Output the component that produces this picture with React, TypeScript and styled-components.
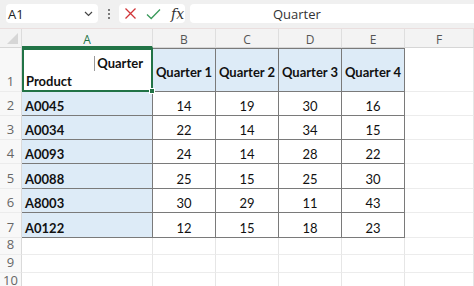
import { Fragment } from "react";
import styled, { createGlobalStyle } from "styled-components";

const GlobalStyle = createGlobalStyle`
  html, body {
    margin: 0;
    padding: 0;
    background: #ffffff;
    overflow: hidden;
  }
  * { box-sizing: border-box; }
`;

const Page = styled.div`
  width: 474px;
  height: 286px;
  overflow: hidden;
  font-family: "Open Sans", "Noto Sans", sans-serif;
`;

const Toolbar = styled.div`
  height: 29px;
  background: #f0f0f0;
  border-bottom: 1px solid #eadede;
  display: flex;
  align-items: center;
  padding: 0 0 1px 6px;
`;

const NameBox = styled.div`
  width: 92px;
  height: 19px;
  background: #fff;
  border-radius: 4px;
  display: flex;
  align-items: center;
  justify-content: space-between;
  padding: 0 5px 0 2px;
  font-size: 13px;
  color: #222;
`;

const Dots = styled.div`
  width: 21px;
  display: flex;
  flex-direction: column;
  align-items: center;
  gap: 2px;
  span {
    width: 2px;
    height: 2px;
    border-radius: 1px;
    background: #555;
  }
`;

const ActionBox = styled.div`
  width: 66px;
  height: 19px;
  background: #fff;
  border-radius: 4px;
  display: flex;
  align-items: center;
  gap: 9px;
  padding-left: 5px;
`;

const Fx = styled.span`
  font-family: "DejaVu Serif", "Liberation Serif", serif;
  font-style: italic;
  font-size: 14px;
  color: #333;
  margin-left: 1px;
`;

const FormulaBox = styled.div`
  flex: 1;
  height: 19px;
  margin-left: 5px;
  background: #fff;
  border-radius: 4px 0 0 4px;
  display: flex;
  align-items: center;
  padding-left: 83px;
  font-size: 13px;
  color: #333;
`;

const Sheet = styled.div`
  display: grid;
  grid-template-columns: 22px 131px 63px 63px 63px 63px 1fr;
  grid-template-rows: 19px 44px 24px 24px 24px 25px 24px 25px 17px 18px 18px;
  font-family: Lato, "Open Sans", sans-serif;
  font-size: 13px;
  color: #111;
`;

const Corner = styled.div`
  background: #f3f3f3;
  border-right: 1px solid #dcdcdc;
  border-bottom: 1px solid #d6d6d6;
  position: relative;
  &::after {
    content: "";
    position: absolute;
    right: 3px;
    bottom: 3px;
    width: 0;
    height: 0;
    border-left: 11px solid transparent;
    border-bottom: 11px solid #d6d6d6;
  }
`;

const ColHead = styled.div<{ $active?: boolean }>`
  background: #f3f3f3;
  border-right: 1px solid #dedede;
  border-bottom: ${(p) => (p.$active ? "2px solid #217346" : "1px solid #d6d6d6")};
  display: flex;
  align-items: center;
  justify-content: center;
  padding-top: ${(p) => (p.$active ? "4px" : "3px")};
  font-family: "Open Sans", "Noto Sans", sans-serif;
  font-size: 12px;
  color: ${(p) => (p.$active ? "#217346" : "#555")};
`;

const RowHead = styled.div`
  background: #f8f8f8;
  border-right: 1px solid #dadada;
  border-bottom: 1px solid #ececec;
  display: flex;
  align-items: flex-end;
  justify-content: center;
  padding-bottom: 1px;
  font-family: "Open Sans", "Noto Sans", sans-serif;
  font-size: 13px;
  color: #666;
`;

const Cell = styled.div<{ $fill?: boolean; $table?: boolean; $bold?: boolean; $align?: string; $top?: boolean }>`
  background: ${(p) => (p.$fill ? "#ddebf7" : "#fff")};
  border-right: 1px solid ${(p) => (p.$table ? "#7a7a7a" : "#e6e6e6")};
  border-bottom: 1px solid ${(p) => (p.$table ? "#7a7a7a" : "#ececec")};
  ${(p) => (p.$top ? "border-top: 1px solid #7a7a7a;" : "")}
  display: flex;
  align-items: ${(p) => (p.$align === "center" ? "center" : "flex-end")};
  justify-content: ${(p) => (p.$align === "left" ? "flex-start" : "center")};
  padding: ${(p) => (p.$align === "center" ? "3px 3px 0" : "0 3px 1px 3px")};
  font-weight: ${(p) => (p.$bold ? 700 : 400)};
  white-space: nowrap;
`;

const TitleCell = styled.div`
  background: #fff;
  border: 2px solid #217346;
  position: relative;
  display: flex;
  flex-direction: column;
  justify-content: flex-end;
  padding: 0 8px 0 2px;
  font-weight: 700;
  line-height: 18px;
`;

const TopLine = styled.div`
  display: flex;
  justify-content: flex-end;
  align-items: center;
  gap: 2px;
  &::before {
    content: "";
    width: 1px;
    height: 15px;
    background: #9a9a9a;
  }
`;

const Handle = styled.div`
  position: absolute;
  right: -4px;
  bottom: -4px;
  width: 6px;
  height: 6px;
  background: #217346;
  border: 1px solid #fff;
`;

const cols = ["A", "B", "C", "D", "E", "F"];
const quarters = ["Quarter 1", "Quarter 2", "Quarter 3", "Quarter 4"];
const data: [string, number, number, number, number][] = [
  ["A0045", 14, 19, 30, 16],
  ["A0034", 22, 14, 34, 15],
  ["A0093", 24, 14, 28, 22],
  ["A0088", 25, 15, 25, 30],
  ["A8003", 30, 29, 11, 43],
  ["A0122", 12, 15, 18, 23],
];

const XIcon = () => (
  <svg width="13" height="13" viewBox="0 0 13 13">
    <path d="M1.5 1.5 L11.5 11.5 M11.5 1.5 L1.5 11.5" stroke="#d13438" strokeWidth="1.3" fill="none" />
  </svg>
);

const CheckIcon = () => (
  <svg width="15" height="12" viewBox="0 0 15 12">
    <path d="M1 6.5 L5.2 10.5 L14 1.5" stroke="#3a9a5b" strokeWidth="1.3" fill="none" />
  </svg>
);

const Chevron = () => (
  <svg width="9" height="6" viewBox="0 0 9 6">
    <path d="M1 1 L4.5 4.5 L8 1" stroke="#444" strokeWidth="1.2" fill="none" />
  </svg>
);

const App = () => {
  return (
    <Page>
      <GlobalStyle />
      <Toolbar>
        <NameBox>
          <span>A1</span>
          <Chevron />
        </NameBox>
        <Dots>
          <span />
          <span />
          <span />
        </Dots>
        <ActionBox>
          <XIcon />
          <CheckIcon />
          <Fx>fx</Fx>
        </ActionBox>
        <FormulaBox>Quarter</FormulaBox>
      </Toolbar>
      <Sheet>
        <Corner />
        {cols.map((c) => (
          <ColHead key={c} $active={c === "A"}>
            {c}
          </ColHead>
        ))}

        <RowHead>1</RowHead>
        <TitleCell>
          <TopLine>Quarter</TopLine>
          <div>Product</div>
          <Handle />
        </TitleCell>
        {quarters.map((q) => (
          <Cell key={q} $fill $table $bold $align="center" $top>
            {q}
          </Cell>
        ))}
        <Cell />

        {data.map((row, i) => (
          <Fragment key={row[0]}>
            <RowHead>{i + 2}</RowHead>
            <Cell $fill $table $bold $align="left">
              {row[0]}
            </Cell>
            {row.slice(1).map((v, j) => (
              <Cell key={j} $table>
                {v}
              </Cell>
            ))}
            <Cell />
          </Fragment>
        ))}

        {[8, 9, 10].map((n) => (
          <Fragment key={n}>
            <RowHead>{n}</RowHead>
            {cols.map((c) => (
              <Cell key={c} />
            ))}
          </Fragment>
        ))}
      </Sheet>
    </Page>
  );
};

export default App;
